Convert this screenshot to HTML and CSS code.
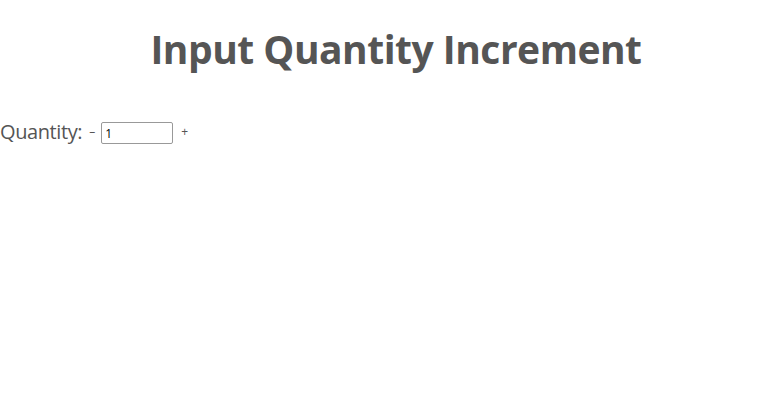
FILE: index.html
```html
<!DOCTYPE html>
<html>
<head>
<meta charset="utf-8">
<link rel="stylesheet" href="styles.css">
</head>
<body>
<h1 class="title">Input Quantity Increment</h1>
<div class="qty">
  <label class="qty-label" for="q">Quantity:</label>
  <button class="step">–</button>
  <input id="q" class="qty-input" type="text" value="1">
  <button class="step">+</button>
</div>
</body>
</html>
```
FILE: styles.css
```css
html, body { margin: 0; padding: 0; background: #fff; }
body { font-family: "Open Sans", "Noto Sans", sans-serif; color: #555; }
.title {
  margin: 24px 0 0;
  padding-left: 24px;
  text-align: center;
  font-size: 39px;
  font-weight: 700;
  line-height: 50px;
  letter-spacing: -0.5px;
}
.qty {
  display: flex;
  align-items: center;
  margin-top: 47px;
  height: 24px;
}
.qty-label { font-size: 20px; letter-spacing: -0.4px; margin-right: 7px; position: relative; top: -2px; }
.step {
  border: 0; background: none; padding: 0; color: #555;
  font-family: inherit; font-size: 12px; margin: 0 6px 0 0;
  position: relative; top: -2px;
}
.qty-input {
  width: 72px; height: 22px; box-sizing: border-box;
  border: 1px solid #999; border-radius: 2px;
  padding: 0 3px; font-family: "Open Sans", sans-serif; font-size: 12px; color: #000;
  margin-right: 8px;
}
```
